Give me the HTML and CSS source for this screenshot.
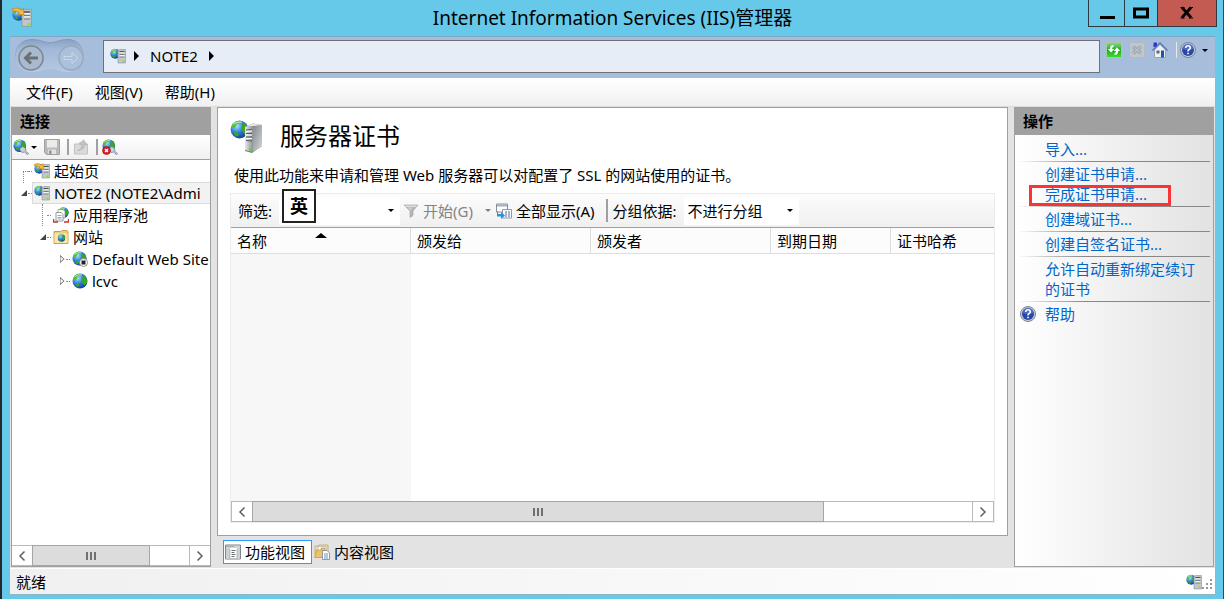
FILE: index.html
```html
<!DOCTYPE html>
<html lang="zh-CN">
<head>
    <meta charset="UTF-8">
    <meta name="viewport" content="width=device-width, initial-scale=1.0">
    <title>Internet Information Services (IIS)管理器</title>
    <link rel="stylesheet" href="styles.css">
</head>
<body>
    <!-- 图标 -->
    <svg class="sprite" aria-hidden="true">
        <defs>
            <radialGradient id="sea" cx="0.35" cy="0.3" r="0.75">
                <stop offset="0" stop-color="#a8e0ff"/>
                <stop offset="0.5" stop-color="#2f7ee0"/>
                <stop offset="1" stop-color="#123a96"/>
            </radialGradient>
            <linearGradient id="metal" x1="0" x2="1" y1="0" y2="0">
                <stop offset="0" stop-color="#e6e8ea"/>
                <stop offset="1" stop-color="#8c9195"/>
            </linearGradient>
            <linearGradient id="side" x1="0" x2="1" y1="0" y2="1">
                <stop offset="0" stop-color="#84898d"/>
                <stop offset="1" stop-color="#d4d7d9"/>
            </linearGradient>
            <linearGradient id="green" x1="0" x2="0" y1="0" y2="1">
                <stop offset="0" stop-color="#8fd98c"/>
                <stop offset="0.5" stop-color="#1faa22"/>
                <stop offset="1" stop-color="#3ede2c"/>
            </linearGradient>
            <linearGradient id="navrim" x1="0" x2="0" y1="0" y2="1">
                <stop offset="0" stop-color="#88a2c4"/>
                <stop offset="0.3" stop-color="#a1b9d7"/>
                <stop offset="1" stop-color="#b3c8e1"/>
            </linearGradient>
            <linearGradient id="navedge" x1="0" x2="0" y1="0" y2="1">
                <stop offset="0" stop-color="#7f99bb"/>
                <stop offset="1" stop-color="#b9cce3"/>
            </linearGradient>
        </defs>
        <symbol id="globe" viewBox="0 0 16 16">
            <circle cx="8" cy="8" r="7.5" fill="url(#sea)"/>
            <path d="M2 4C4 1 6 0.6 8 1L7.5 3 5.500 3.500 5 5.500 3.500 7 1.500 6.500z" fill="#56c22d"/>
            <path d="M10 3.500L13 3l2 3.500v3.500L12.500 12.500 11 10.500 9.500 7.500z" fill="#3ba524"/>
            <path d="M3.500 10l3 0.500 1 1.500-1.500 2-2.500-1.500z" fill="#3ba524"/>
            <path d="M3 3.500Q6 1 10 2" fill="none" stroke="#e2f8d0" stroke-width="1" opacity="0.7"/>
        </symbol>
        <symbol id="server" viewBox="0 0 16 16">
            <use href="#globe" x="0" y="0.500" width="10.500" height="10.500"/>
            <path d="M8 2.500L9.500 1.500H15.500v13.500H8z" fill="#c3c7ca" stroke="#8b9094" stroke-width="0.600"/>
            <path d="M9.500 3h5v1.200h-5z" fill="#4c5155"/>
            <path d="M9.500 6h5v0.900h-5zM9.500 8.700h5v0.900h-5z" fill="#7a7f83"/>
            <path d="M9.500 4.300h5v1h-5zM9.500 7h5v1h-5z" fill="#f2f3f4"/>
            <path d="M12.500 12.500h2v1.500h-2z" fill="#7ce81c"/>
        </symbol>
        <symbol id="start" viewBox="0 0 16 16">
            <use href="#server" width="16" height="16"/>
            <path d="M0.500 1Q5 -0.500 7.500 2L9 0.500l0.500 5.500L4.500 5.500 6 4Q4 2.300 0.500 3z" fill="#f9b93a" stroke="#c07a12" stroke-width="0.500"/>
        </symbol>
        <symbol id="bigserver" viewBox="0 0 32 33">
            <use href="#globe" width="19" height="19"/>
            <path d="M15 7L23 3.500 32 5v21L22 33l-7-2z" fill="#777c80"/>
            <path d="M15 7l8-1v26l-8-2z" fill="url(#metal)"/>
            <path d="M23 5.500l9-0.500v21l-9 6z" fill="url(#side)"/>
            <path d="M15 7l8-3.500 9 1.500-9 1z" fill="#e5e7e8"/>
            <path d="M16 10l6-0.500M16 13.500h6M16 17h6M16 20.500l6 0.500" stroke="#555a5e" stroke-width="1"/>
            <path d="M16 11.500l6-0.500M16 15h6M16 18.500h6" stroke="#fff" stroke-width="1"/>
            <path d="M19 28l3 0.500v2.500l-3-0.500z" fill="#59d81c"/>
        </symbol>
        <symbol id="connect" viewBox="0 0 16 16">
            <use href="#globe" width="13.500" height="13.500"/>
            <path d="M7 9l3-1.500 3 2.500-0.500 2 3 2.500-1 1.200-3-2.700-2.500 0.500-2-2z" fill="#c6d2da" stroke="#667b8b" stroke-width="0.700"/>
        </symbol>
        <symbol id="disconnect" viewBox="0 0 16 16">
            <use href="#connect" width="16" height="16"/>
            <circle cx="4.500" cy="11.500" r="4" fill="#d2202b" stroke="#8e1018" stroke-width="0.600"/>
            <path d="M3 10l3 3M6 10l-3 3" stroke="#fff" stroke-width="1.400"/>
        </symbol>
        <symbol id="save" viewBox="0 0 16 16">
            <path d="M0.500 0.500h15v15h-13l-2-2z" fill="#b9b9b9" stroke="#a0a0a0"/>
            <path d="M3 1h10v7.500H3z" fill="#ebebeb"/>
            <path d="M4 10.500h8V15H4z" fill="#e2e2e2"/>
            <path d="M5 11.500h2.500V15H5z" fill="#959595"/>
        </symbol>
        <symbol id="up" viewBox="0 0 16 16">
            <path d="M1.500 5h4l1-1.500h3V5h5v10h-13z" fill="#dadada" stroke="#c2c2c2"/>
            <path d="M4.500 11.500Q9 10 9 5.500h-2.500L10.500 0.800 14 5.500h-2.300Q11.500 11 4.500 11.500z" fill="#c4c4c4" stroke="#acacac" stroke-width="0.600"/>
        </symbol>
        <symbol id="pool" viewBox="0 0 16 16">
            <use href="#globe" x="5" y="0" width="11" height="11"/>
            <path d="M5 2.500h5l2 2V11H5z" fill="#fff" stroke="#8b929b" stroke-width="0.800"/>
            <path d="M3 5.500h5l2 2V14H3z" fill="#fff" stroke="#79818c" stroke-width="0.800"/>
            <path d="M4.500 8.500h4M4.500 10.500h4M4.500 12h4" stroke="#7c92b4" stroke-width="0.800"/>
            <path d="M0.500 12v3H5M15.500 12v3H11" fill="none" stroke="#c53431" stroke-width="1.400"/>
        </symbol>
        <symbol id="sites" viewBox="0 0 16 16">
            <path d="M1 2.500h7l1-1h5l1 1.500v11.500H1z" fill="#f2cf77" stroke="#b88e35" stroke-width="0.800"/>
            <path d="M1.500 4.500h13v9.500h-13z" fill="#ffe6a5"/>
            <use href="#globe" x="4.500" y="5" width="8" height="8"/>
        </symbol>
        <symbol id="stopped" viewBox="0 0 16 16">
            <use href="#globe" width="15" height="15"/>
            <circle cx="11.500" cy="11.500" r="4" fill="#fff" stroke="#777" stroke-width="0.800"/>
            <path d="M9.500 9.500h4v4h-4z" fill="#222"/>
        </symbol>
        <symbol id="help" viewBox="0 0 16 16">
            <circle cx="8" cy="8" r="7.500" fill="#ccd0d7" stroke="#747b88" stroke-width="0.900"/>
            <circle cx="8" cy="8" r="6" fill="#2849a8"/>
            <path d="M2.500 7a5.500 5.500 0 0 1 11 0Q8 9 2.500 7z" fill="#5a7bd0" opacity="0.700"/>
            <path d="M5.800 6Q5.800 3.800 8 3.800q2.300 0 2.300 2Q10.300 7 8.800 7.700 8 8.200 8 9.500" fill="none" stroke="#fff" stroke-width="1.600"/>
            <path d="M7.200 10.700h1.700v1.600H7.200z" fill="#fff"/>
        </symbol>
        <symbol id="refresh" viewBox="0 0 16 16">
            <path d="M0.500 0.500h15v15h-15z" fill="url(#green)" stroke="#a6c9a6"/>
            <path d="M7.500 3Q4 3 4 7H1.800L5 10.500 8.200 7H6Q6 5 7.500 5zM8.500 13Q12.200 13 12.200 9h2L11 5.500 7.800 9H10q0 2-1.500 2z" fill="#fff"/>
        </symbol>
        <symbol id="stop" viewBox="0 0 16 16">
            <path d="M0.500 0.500h15v15h-15z" fill="#bfc6cd" stroke="#b1b9c1"/>
            <path d="M4 4.500l8 7M12 4.500l-8 7" stroke="#959da6" stroke-width="3"/>
            <path d="M4 4.500l8 7M12 4.500l-8 7" stroke="#bcc3ca" stroke-width="1.400"/>
        </symbol>
        <symbol id="home" viewBox="0 0 16 16">
            <path d="M1.500 0.500h3.500V5H1.500z" fill="#2938d2"/>
            <path d="M2.500 8L8 2.500 13.500 8v7.500h-11z" fill="#eef1f5" stroke="#8c96a8" stroke-width="0.800"/>
            <path d="M0.500 8.500L8 1l7.500 7.500" fill="none" stroke="#5c70b8" stroke-width="1.300"/>
            <path d="M4.500 8.500h3v3h-3z" fill="#5e6878"/>
            <path d="M9 8.500h3v7H9z" fill="#1d55a8"/>
        </symbol>
        <symbol id="funnel" viewBox="0 0 16 16">
            <path d="M1 2h14l-5 6v4.500L7 14.500V8z" fill="#b5b5b5" stroke="#a0a0a0" stroke-width="0.600"/>
            <path d="M2 2.500h12l-1 1.500H3z" fill="#dcdcdc"/>
            <path d="M7.500 8L5 4.500h4z" fill="#d0d0d0"/>
        </symbol>
        <symbol id="showall" viewBox="0 0 16 16">
            <path d="M0.500 1h11v8h-11z" fill="#fff" stroke="#848f9b"/>
            <path d="M1 1.500h10v2H1z" fill="#a7b0ba"/>
            <path d="M6.500 6.500h9v8.500h-9z" fill="#f5f8fc" stroke="#8e9bab"/>
            <path d="M9 9h2M12 9h2M9 11h2M12 11h2M9 13h2M12 13h2" stroke="#5672a6" stroke-width="1.200"/>
            <path d="M2 8.500v2.500h3V9l4 3.500-4 3.500v-2.500H1V8.500z" fill="#2396dc"/>
        </symbol>
        <symbol id="features" viewBox="0 0 16 16">
            <path d="M0.500 1h15v14h-15z" fill="#fff" stroke="#7f858a"/>
            <path d="M1 1.500h14v2H1z" fill="#a4abb2"/>
            <path d="M9.500 2.500h1M11.500 2.500h1M13.500 2.500h1" stroke="#fff"/>
            <path d="M1 4h4v10.500H1zM12 4h3v10.500h-3z" fill="#ccd1d2"/>
            <path d="M5 5v9.500M12 5v9.500" stroke="#9aa09f" stroke-width="0.600"/>
            <path d="M6.500 6.500h4M6.500 8.500h3M6.500 10.500h4M6.500 12.500h3" stroke="#6f7478"/>
        </symbol>
        <symbol id="content" viewBox="0 0 16 16">
            <path d="M1 2h3l1-1h9v9H1z" fill="#f6e0a8" stroke="#b79a5a" stroke-width="0.700"/>
            <path d="M4 2.500h8V8H4z" fill="#fff" stroke="#9aa0a6" stroke-width="0.600"/>
            <path d="M0.500 13.500L2.500 6H7V4h4v9.500z" fill="#eec263" stroke="#b28a3a" stroke-width="0.600"/>
            <path d="M8.500 6.500H13l2.500 2.500v6.500h-7z" fill="#fff" stroke="#7485a0" stroke-width="0.800"/>
            <path d="M10 10h4M10 12h4M10 14h4" stroke="#4c72b4" stroke-width="0.800"/>
        </symbol>
    </svg>

    <div class="window">
        <header class="titlebar">
            <svg class="app-icon"><use href="#start"/></svg>
            <h1>Internet Information Services (IIS)管理器</h1>
            <div class="window-buttons">
                <button class="win-btn minimize" type="button" aria-label="最小化"><svg viewBox="0 0 16 14"><path d="M1 11.500h15" stroke="#000" stroke-width="3"/></svg></button>
                <button class="win-btn maximize" type="button" aria-label="最大化"><svg viewBox="0 0 16 14"><path d="M1.500 3h13v8h-13z" fill="none" stroke="#000" stroke-width="3"/></svg></button>
                <button class="win-btn close" type="button" aria-label="关闭"><svg viewBox="0 0 16 14"><path d="M3 1.500l9 10M12 1.500l-9 10" stroke="#000" stroke-width="2.800"/><path d="M1.500 1.500h4M10 1.500h4M1.500 12h4M10 12h4" stroke="#000" stroke-width="1.200"/></svg></button>
            </div>
        </header>

        <div class="frame">
            <!-- 导航栏 -->
            <nav class="navbar">
                <div class="history">
                    <svg class="history-rim" viewBox="0 0 72 36"><path d="M18 1.500Q25 1.500 31 4q5 1.500 10 0Q47 1.500 54 1.500c20 0 20 32 0 32Q47 33.500 41 31q-5-1.500-10 0-6 2.500-13 2.500c-22 0-22-32 0-32z" fill="url(#navrim)" stroke="url(#navedge)"/></svg>
                    <button class="round" type="button" aria-label="后退"><svg viewBox="0 0 26 26"><circle cx="13" cy="13" r="12" fill="#a9bad0" stroke="#80868e" stroke-width="1.600"/><path d="M20 13H8M13 7.500L7.500 13l5.500 5.500" fill="none" stroke="#6c7075" stroke-width="3"/></svg></button>
                    <button class="round" type="button" aria-label="前进"><svg viewBox="0 0 26 26"><circle cx="13" cy="13" r="12" fill="#abc0da" stroke="#98a8bc" stroke-width="1.400"/><path d="M6 11.500h8V7.500l6 5.500-6 5.500v-4H6z" fill="#acbfd7" stroke="#cbd8e7"/></svg></button>
                </div>
                <div class="address">
                    <svg class="icon"><use href="#server"/></svg>
                    <span class="arrow-right"></span>
                    <span>NOTE2</span>
                    <span class="arrow-right"></span>
                </div>
                <div class="nav-tools">
                    <button type="button" aria-label="刷新"><svg class="icon"><use href="#refresh"/></svg></button>
                    <button type="button" aria-label="停止"><svg class="icon"><use href="#stop"/></svg></button>
                    <button type="button" aria-label="主页"><svg class="icon"><use href="#home"/></svg></button>
                    <button class="nav-help" type="button" aria-label="帮助"><svg class="icon"><use href="#help"/></svg><span class="caret"></span></button>
                </div>
            </nav>

            <div class="menubar">
                <button type="button">文件(F)</button>
                <button type="button">视图(V)</button>
                <button type="button">帮助(H)</button>
            </div>

            <main class="panes">
                <!-- 连接 -->
                <aside class="pane connections">
                    <h2 class="pane-title">连接</h2>
                    <div class="pane-tools">
                        <button type="button" aria-label="连接"><svg class="icon"><use href="#connect"/></svg><span class="caret"></span></button>
                        <button type="button" aria-label="保存"><svg class="icon"><use href="#save"/></svg></button>
                        <span class="divider"></span>
                        <button type="button" aria-label="向上"><svg class="icon"><use href="#up"/></svg></button>
                        <span class="divider"></span>
                        <button type="button" aria-label="断开连接"><svg class="icon"><use href="#disconnect"/></svg></button>
                    </div>
                    <ul class="tree">
                        <li>
                            <div class="node"><span class="twist line"></span><a class="leaf" href="#"><svg class="icon"><use href="#start"/></svg>起始页</a></div>
                        </li>
                        <li>
                            <div class="node"><span class="twist open"></span><a class="leaf selected" href="#"><svg class="icon"><use href="#server"/></svg>NOTE2 (NOTE2\Admi</a></div>
                            <ul>
                                <li>
                                    <div class="node"><span class="twist line"></span><a class="leaf" href="#"><svg class="icon"><use href="#pool"/></svg>应用程序池</a></div>
                                </li>
                                <li>
                                    <div class="node"><span class="twist open"></span><a class="leaf" href="#"><svg class="icon"><use href="#sites"/></svg>网站</a></div>
                                    <ul>
                                        <li>
                                            <div class="node"><span class="twist shut"></span><a class="leaf" href="#"><svg class="icon"><use href="#stopped"/></svg>Default Web Site</a></div>
                                        </li>
                                        <li>
                                            <div class="node"><span class="twist shut"></span><a class="leaf" href="#"><svg class="icon"><use href="#globe"/></svg>lcvc</a></div>
                                        </li>
                                    </ul>
                                </li>
                            </ul>
                        </li>
                    </ul>
                    <div class="scrollbar">
                        <button type="button" aria-label="向左滚动"><svg viewBox="0 0 8 12"><path d="M6.500 1.500L2 6l4.500 4.500"/></svg></button>
                        <div class="track"><div class="thumb tree-thumb"><i></i><i></i><i></i></div></div>
                        <button type="button" aria-label="向右滚动"><svg viewBox="0 0 8 12"><path d="M1.500 1.500L6 6l-4.500 4.500"/></svg></button>
                    </div>
                </aside>

                <!-- 服务器证书 -->
                <section class="center">
                    <div class="workspace">
                        <div class="feature-head">
                            <svg class="big-icon"><use href="#bigserver"/></svg>
                            <h2>服务器证书</h2>
                        </div>
                        <p class="feature-desc">使用此功能来申请和管理 Web 服务器可以对配置了 SSL 的网站使用的证书。</p>

                        <div class="list">
                            <div class="filterbar">
                                <label for="filter">筛选:</label>
                                <div class="combo filter-combo">
                                    <input id="filter" type="text">
                                    <span class="caret"></span>
                                    <span class="ime">英</span>
                                </div>
                                <button class="go" type="button" disabled><svg class="icon"><use href="#funnel"/></svg>开始(G)<span class="caret"></span></button>
                                <button type="button"><svg class="icon"><use href="#showall"/></svg>全部显示(A)</button>
                                <span class="divider"></span>
                                <label for="group">分组依据:</label>
                                <div class="combo group-combo">
                                    <select id="group">
                                        <option>不进行分组</option>
                                    </select>
                                    <span class="caret"></span>
                                </div>
                            </div>
                            <table class="certs">
                                <thead>
                                    <tr>
                                        <th class="sorted">名称</th>
                                        <th>颁发给</th>
                                        <th>颁发者</th>
                                        <th>到期日期</th>
                                        <th>证书哈希</th>
                                    </tr>
                                </thead>
                                <tbody>
                                    <tr>
                                        <td class="sorted"></td>
                                        <td></td>
                                        <td></td>
                                        <td></td>
                                        <td></td>
                                    </tr>
                                </tbody>
                            </table>
                            <div class="scrollbar">
                                <button type="button" aria-label="向左滚动"><svg viewBox="0 0 8 12"><path d="M6.500 1.500L2 6l4.500 4.500"/></svg></button>
                                <div class="track"><div class="thumb list-thumb"><i></i><i></i><i></i></div></div>
                                <button type="button" aria-label="向右滚动"><svg viewBox="0 0 8 12"><path d="M1.500 1.500L6 6l-4.500 4.500"/></svg></button>
                            </div>
                        </div>
                    </div>
                    <div class="tabs">
                        <button class="active" type="button"><svg class="icon"><use href="#features"/></svg>功能视图</button>
                        <button type="button"><svg class="icon"><use href="#content"/></svg>内容视图</button>
                    </div>
                </section>

                <!-- 操作 -->
                <aside class="pane actions">
                    <h2 class="pane-title">操作</h2>
                    <ul class="action-list">
                        <li><a href="#">导入...</a></li>
                        <li>
                            <a href="#">创建证书申请...</a>
                            <a class="marked" href="#">完成证书申请...</a>
                        </li>
                        <li><a href="#">创建域证书...</a></li>
                        <li><a href="#">创建自签名证书...</a></li>
                        <li><a href="#">允许自动重新绑定续订的证书</a></li>
                        <li class="with-icon"><svg class="icon"><use href="#help"/></svg><a href="#">帮助</a></li>
                    </ul>
                </aside>
            </main>

            <footer class="statusbar">
                <span>就绪</span>
                <div class="status-right">
                    <svg class="icon"><use href="#server"/></svg>
                    <svg class="grip" viewBox="0 0 11 11"><path d="M8 0h2v2H8zM4 4h2v2H4zM8 4h2v2H8zM0 8h2v2H0zM4 8h2v2H4zM8 8h2v2H8z" fill="#999"/></svg>
                </div>
            </footer>
        </div>
    </div>
</body>
</html>
```
FILE: styles.css
```css
* {
    box-sizing: border-box;
}

body {
    margin: 0;
    font-family: "Noto Sans", "Noto Sans CJK SC", sans-serif;
    font-size: 15px;
    line-height: 20px;
    color: #000;
}

h1, h2, p, ul {
    margin: 0;
    padding: 0;
    font-weight: normal;
}

ul {
    list-style: none;
}

button, input, select {
    margin: 0;
    padding: 0;
    border: none;
    background: none;
    font: inherit;
    color: inherit;
}

button {
    display: flex;
    align-items: center;
    white-space: nowrap;
}

a {
    color: inherit;
    text-decoration: none;
}

.sprite {
    position: absolute;
    width: 0;
    height: 0;
}

.icon {
    flex: none;
    width: 16px;
    height: 16px;
}

.caret {
    flex: none;
    border: 3px solid transparent;
    border-top-color: currentColor;
    border-bottom: none;
}

.divider {
    width: 2px;
    background: #a0a0a0;
}

/* 窗口 */
.window {
    display: flex;
    flex-direction: column;
    height: 100vh;
    padding: 0 8px 4px;
    background: #66c9ea;
    border-left: 2px solid #26272b;
    border-right: 1px solid #1f5266;
}

.titlebar {
    position: relative;
    display: flex;
    flex: none;
    justify-content: center;
    height: 36px;
}

.titlebar h1 {
    font-size: 19px;
    line-height: 36px;
}

.app-icon {
    position: absolute;
    left: 2px;
    top: 7px;
    width: 20px;
    height: 21px;
}

.window-buttons {
    position: absolute;
    top: 0;
    right: -2px;
    display: flex;
    border: 1px solid #2e3a40;
    border-top: none;
}

.win-btn {
    justify-content: center;
    width: 35px;
    height: 26px;
}

.win-btn svg {
    width: 16px;
    height: 14px;
}

.maximize {
    width: 34px;
    border-left: 1px solid #2e3a40;
    border-right: 1px solid #2e3a40;
}

.close {
    width: 58px;
    background: #c35b52;
}

.frame {
    display: flex;
    flex: 1;
    flex-direction: column;
    min-height: 0;
    background: #e3e3e3;
    border-top: 1px solid #7fa6c4;
    border-bottom: 1px solid #8fb4c6;
}

/* 导航栏 */
.navbar {
    display: flex;
    flex: none;
    height: 41px;
    background: #a6bedb;
}

.history {
    position: relative;
    display: flex;
    align-items: center;
    gap: 14px;
    width: 93px;
    padding-left: 8px;
}

.history-rim {
    position: absolute;
    left: 4px;
    top: 1px;
    width: 72px;
    height: 36px;
}

.round {
    position: relative;
    width: 26px;
    height: 26px;
}

.round svg {
    width: 26px;
    height: 26px;
}

.address {
    display: flex;
    flex: 1;
    align-items: center;
    gap: 11px;
    height: 33px;
    margin-top: 3px;
    padding: 0 0 2px 6px;
    background: #e6edf6;
    border: 1px solid #6c7178;
}

.arrow-right {
    border: 5px solid transparent;
    border-left-color: #000;
    border-right: none;
}

.address .icon + .arrow-right {
    margin-left: -3px;
}

.nav-tools {
    display: flex;
    gap: 7px;
    align-items: flex-start;
    padding: 5px 7px 0 6px;
}

.nav-help {
    gap: 6px;
    margin-left: 1px;
    padding-left: 3px;
    border-left: 1px solid #e8e8e8;
}

/* 菜单 */
.menubar {
    display: flex;
    flex: none;
    align-items: center;
    gap: 22px;
    height: 29px;
    padding-left: 16px;
    background: linear-gradient(#fff, #f0f0f0);
    border-bottom: 1px solid #dcdcdc;
}

.panes {
    display: flex;
    flex: 1;
    gap: 6px;
    min-height: 0;
    padding: 0 1px;
}

.pane {
    display: flex;
    flex: none;
    flex-direction: column;
    width: 200px;
    background: #fff;
    border: 1px solid #a0a0a0;
}

.pane-title {
    flex: none;
    height: 27px;
    padding-left: 8px;
    background: #a0a0a0;
    font-size: 15px;
    line-height: 27px;
    font-weight: bold;
}

.pane-tools {
    display: flex;
    flex: none;
    align-items: center;
    gap: 7px;
    height: 25px;
    padding-left: 1px;
    background: linear-gradient(#fff, #f0f0f0);
    border-bottom: 1px solid #a0a0a0;
}

.pane-tools button {
    gap: 2px;
}

.pane-tools .divider {
    height: 16px;
}

.pane-tools .divider + button {
    margin-left: -3px;
}

/* 连接树 */
.tree {
    flex: 1;
    overflow: hidden;
}

.tree ul {
    padding-left: 19px;
}

.node {
    display: flex;
    align-items: center;
    height: 22px;
    padding-left: 8px;
}

/* 层级虚线 */
.node::after {
    content: "";
    flex: none;
    order: 1;
    width: 4px;
    border-top: 1px dotted #888;
}

.twist {
    display: flex;
    flex: none;
    justify-content: center;
    align-items: center;
    width: 8px;
    height: 22px;
}

.twist.line::before {
    content: "";
    width: 5px;
    height: 11px;
    margin: 11px 0 0 3px;
    border-top: 1px dotted #888;
    border-left: 1px dotted #888;
}

.tree ul .twist.line::before {
    height: 22px;
    margin-top: 0;
    border-top: none;
}

.twist.open::before {
    content: "";
    border-left: 6px solid transparent;
    border-bottom: 6px solid #444;
}

.twist.shut::before {
    content: "";
    width: 5px;
    height: 9px;
    background: #666;
    clip-path: polygon(0 0, 100% 50%, 0 100%, 0 0, 1px 2px, 1px 7px, 4px 50%, 1px 2px);
}

.leaf {
    display: flex;
    flex: 1;
    order: 2;
    align-items: center;
    gap: 4px;
    min-width: 0;
    height: 22px;
    padding-left: 1px;
    border: 1px solid transparent;
    border-right: none;
    white-space: nowrap;
}

.leaf.selected {
    background: #f2f2f2;
    border-color: #dadada;
}

/* 滚动条 */
.scrollbar {
    display: flex;
    flex: none;
    height: 21px;
    border: 1px solid #bababa;
    background: #fff;
}

.scrollbar button {
    justify-content: center;
    width: 20px;
}

.scrollbar button svg {
    width: 8px;
    height: 12px;
    fill: none;
    stroke: #606060;
    stroke-width: 1.5;
}

.track {
    display: flex;
    flex: 1;
    border-right: 1px solid #bababa;
}

.thumb {
    display: flex;
    justify-content: center;
    align-items: center;
    gap: 2px;
    margin: -1px 0;
    background: #dcdcdc;
    border: 1px solid #a5a5a5;
}

.thumb i {
    width: 2px;
    height: 8px;
    background: #707070;
}

.connections .scrollbar {
    border-left: none;
    border-right: none;
}

.tree-thumb {
    width: 75%;
}

.list-thumb {
    width: 79.5%;
}

/* 中间区域 */
.center {
    display: flex;
    flex: 1;
    flex-direction: column;
    min-width: 0;
}

.workspace {
    display: flex;
    flex: 1;
    flex-direction: column;
    min-height: 0;
    padding: 10px 12px 12px;
    background: #fff;
    border: 1px solid #a0a0a0;
}

.feature-head {
    display: flex;
    align-items: center;
    gap: 18px;
    height: 36px;
}

.feature-head h2 {
    font-size: 24px;
    line-height: 36px;
}

.big-icon {
    width: 32px;
    height: 33px;
}

.feature-desc {
    padding: 11px 4px 8px;
}

.list {
    display: flex;
    flex: 1;
    flex-direction: column;
    min-height: 0;
    border: 1px solid #ececec;
}

.filterbar {
    display: flex;
    flex: none;
    align-items: center;
    height: 34px;
    padding-left: 7px;
    background: linear-gradient(#fcfcfc, #f0f0f0);
    border-bottom: 1px solid #a0a0a0;
}

.filterbar button {
    gap: 4px;
}

.filterbar .go {
    margin: 0 5px 0 3px;
    color: #838383;
}

.go .caret {
    margin-left: 8px;
}

.filterbar .divider {
    height: 23px;
    margin: 0 5px 0 11px;
}

.combo {
    position: relative;
    display: flex;
    align-items: center;
    height: 28px;
    margin-left: 7px;
    padding-right: 6px;
    background: #fff;
}

.filter-combo {
    width: 121px;
}

.group-combo {
    width: 115px;
}

.combo input, .combo select {
    flex: 1;
    min-width: 0;
    height: 28px;
    padding-left: 4px;
    appearance: none;
    outline: none;
}

/* 输入法状态 */
.ime {
    position: absolute;
    left: 3px;
    top: -8px;
    width: 34px;
    height: 34px;
    background: #fff;
    border: 2px solid #222;
    font-size: 18px;
    line-height: 30px;
    font-weight: bold;
    text-align: center;
}

.certs {
    flex: 1;
    display: flex;
    flex-direction: column;
    min-height: 0;
}

.certs thead {
    flex: none;
}

.certs tbody {
    display: flex;
    flex: 1;
}

.certs tr {
    display: grid;
    flex: 1;
    grid-template-columns: 180px 180px 180px 120px 1fr;
}

.certs th {
    position: relative;
    height: 26px;
    padding-left: 6px;
    background: #fcfcfc;
    border-right: 1px solid #dedede;
    border-bottom: 1px solid #dedede;
    font-weight: normal;
    line-height: 24px;
    text-align: left;
}

.certs th:last-child {
    border-right: none;
}

.certs td {
    padding: 0;
}

.certs td.sorted {
    background: #f7f7f7;
}

/* 排序箭头 */
.certs th.sorted::after {
    content: "";
    position: absolute;
    left: 50%;
    top: 5px;
    margin-left: -6px;
    border: 6px solid transparent;
    border-top: none;
    border-bottom: 5px solid #000;
}

/* 视图切换 */
.tabs {
    display: flex;
    flex: none;
    padding: 4px 6px 3px;
}

.tabs button {
    gap: 4px;
    height: 24px;
    padding: 0 6px 0 1px;
    border: 1px solid transparent;
}

.tabs .active {
    background: #fff;
    border-color: #3399ff;
}

/* 操作 */
.actions {
    background: linear-gradient(to right, #fff, #e2e2e2);
}

.action-list {
    padding: 2px 3px;
    color: #0066cc;
}

.action-list li {
    padding: 2px 15px 2px 27px;
    border-bottom: 1px solid;
    border-image: linear-gradient(to right, transparent, #888 35%, #888) 1;
}

.action-list li:last-child {
    border-bottom: none;
}

.action-list a {
    position: relative;
    display: block;
}

.action-list .with-icon {
    display: flex;
    align-items: center;
    gap: 9px;
    padding-left: 2px;
}

/* 红色标记框 */
.marked::after {
    content: "";
    position: absolute;
    left: -16px;
    right: 24px;
    top: 1px;
    bottom: -2px;
    border: 3px solid #fa3434;
}

/* 状态栏 */
.statusbar {
    display: flex;
    flex: none;
    justify-content: space-between;
    align-items: center;
    height: 26px;
    margin-top: 1px;
    padding: 0 2px 0 6px;
    background: linear-gradient(to right, #f0f0f0, #fff);
    border-top: 1px solid #fff;
}

.status-right {
    display: flex;
    align-items: flex-end;
}

.grip {
    width: 11px;
    height: 11px;
}
```
